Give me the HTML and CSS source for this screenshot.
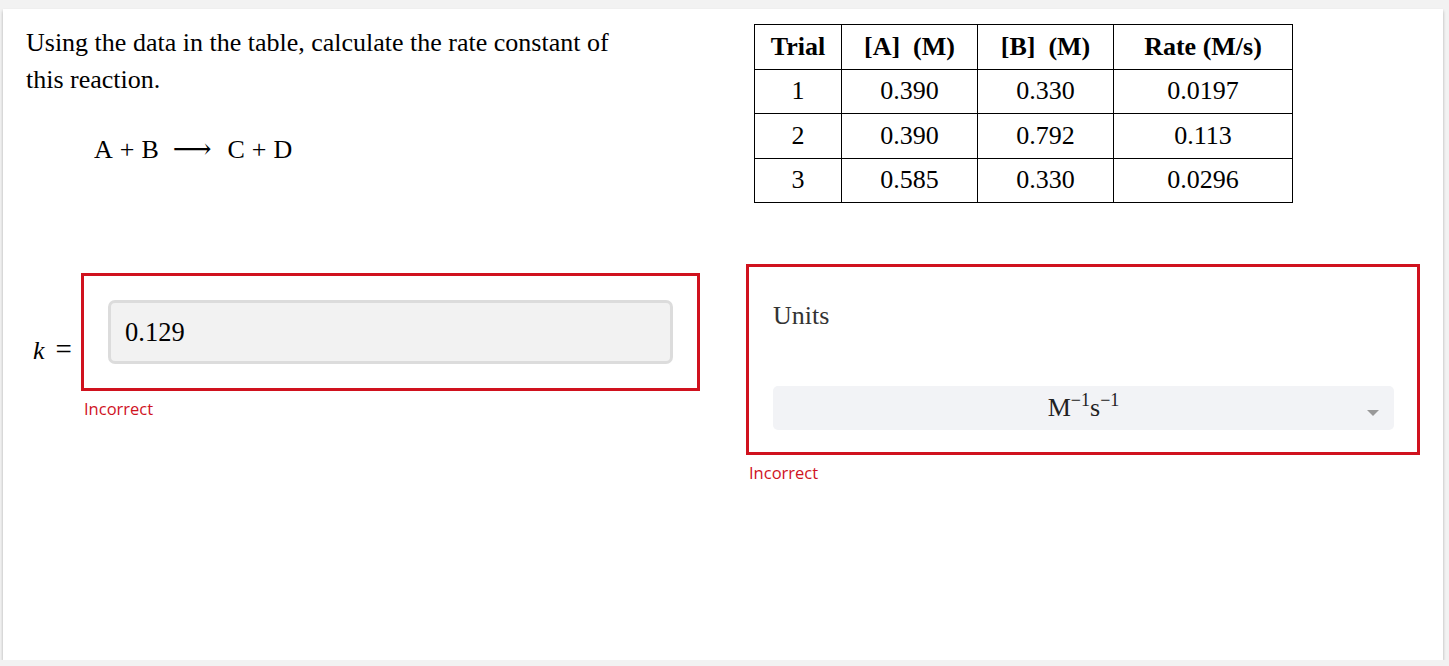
FILE: index.html
```html
<!DOCTYPE html>
<html lang="en">
<head>
    <meta charset="UTF-8">
    <meta name="viewport" content="width=device-width, initial-scale=1.0">
    <title>Rate Constant Question</title>
    <link rel="stylesheet" href="styles.css">
</head>
<body>

    <div class="card">
        <div class="top-row">
            <div class="question">
                <p class="prompt">Using the data in the table, calculate the rate constant of this reaction.</p>
                <p class="equation">A<span class="op">+</span>B<span class="arrow">&#10230;</span>C<span class="op">+</span>D</p>
            </div>

            <table class="data-table">
                <tr>
                    <th class="col-trial">Trial</th>
                    <th class="col-a">[A]&nbsp; (M)</th>
                    <th class="col-b">[B]&nbsp; (M)</th>
                    <th class="col-rate">Rate (M/s)</th>
                </tr>
                <tr>
                    <td>1</td>
                    <td>0.390</td>
                    <td>0.330</td>
                    <td>0.0197</td>
                </tr>
                <tr>
                    <td>2</td>
                    <td>0.390</td>
                    <td>0.792</td>
                    <td>0.113</td>
                </tr>
                <tr>
                    <td>3</td>
                    <td>0.585</td>
                    <td>0.330</td>
                    <td>0.0296</td>
                </tr>
            </table>
        </div>

        <div class="bottom-row">
            <div class="answer-col">
                <div class="field-row">
                    <span class="k-label"><i>k</i><span class="eq">=</span></span>
                    <div class="answer-box">
                        <div class="answer-input">0.129</div>
                    </div>
                </div>
                <div class="feedback feedback-left">Incorrect</div>
            </div>

            <div class="units-col">
                <div class="units-box">
                    <div class="units-label">Units</div>
                    <div class="units-select">
                        <span>M<sup>&minus;1</sup>s<sup>&minus;1</sup></span>
                        <span class="caret"></span>
                    </div>
                </div>
                <div class="feedback">Incorrect</div>
            </div>
        </div>
    </div>

</body>
</html>
```

FILE: styles.css
```css
body {
    margin: 0;
    padding: 0;
    background-color: #f2f2f2;
    font-family: "Liberation Serif", "Times New Roman", serif;
    color: #000;
}

.card {
    margin: 9px 0 0 3px;
    width: 1440px;
    height: 651px;
    box-sizing: border-box;
    padding: 15px 23px 0 23px;
    background-color: #fff;
    box-shadow: 0 2px 3px rgba(0, 0, 0, 0.28);
}

.top-row {
    display: flex;
    align-items: flex-start;
}

.question {
    width: 728px;
}

.prompt {
    margin: 0;
    width: 615px;
    font-size: 26px;
    line-height: 37px;
}

.equation {
    margin: 32px 0 0 68px;
    font-size: 26px;
    line-height: 37px;
}

.op {
    margin: 0 7px;
}

.arrow {
    margin: 0 16px 0 14px;
    font-family: "DejaVu Serif", serif;
    font-size: 27px;
}

.data-table {
    border-collapse: collapse;
    font-size: 26px;
}

.data-table th,
.data-table td {
    border: 1.5px solid #000;
    height: 43.5px;
    padding: 0;
    text-align: center;
}

.data-table th {
    font-weight: bold;
}

.col-trial { width: 86px; }
.col-a { width: 135px; }
.col-b { width: 135px; }
.col-rate { width: 178px; }

.bottom-row {
    display: flex;
    margin-top: 61px;
}

.answer-col {
    width: 720px;
    padding-top: 9px;
}

.field-row {
    display: flex;
    align-items: flex-end;
}

.k-label {
    width: 48px;
    padding-left: 7px;
    padding-bottom: 25px;
    font-size: 26px;
    line-height: 30px;
}

.eq {
    margin-left: 11px;
    font-size: 29px;
}

.answer-box {
    width: 619px;
    box-sizing: border-box;
    padding: 24px;
    border: 3px solid #d0121e;
}

.answer-input {
    height: 64px;
    box-sizing: border-box;
    padding: 0 14px;
    display: flex;
    align-items: center;
    background-color: #f2f2f2;
    border: 3px solid #dcdcdc;
    border-radius: 7px;
    font-size: 26.5px;
}

.feedback {
    margin: 6px 0 0 3px;
    font-family: "Open Sans", "Liberation Sans", sans-serif;
    font-size: 16.5px;
    color: #d0121e;
}

.feedback-left {
    margin-left: 58px;
}

.units-col {
    width: 674px;
}

.units-box {
    height: 191px;
    box-sizing: border-box;
    padding: 24px 23px 0 24px;
    border: 3px solid #d0121e;
}

.units-label {
    font-size: 26px;
    line-height: 50px;
    color: #333;
}

.units-select {
    position: relative;
    margin-top: 45px;
    height: 44px;
    display: flex;
    align-items: center;
    justify-content: center;
    background-color: #f2f3f6;
    border-radius: 5px;
    font-size: 26px;
    color: #222;
}

.units-select sup {
    font-size: 18px;
    line-height: 0;
}

.caret {
    position: absolute;
    right: 15px;
    top: 24px;
    width: 0;
    height: 0;
    border-left: 6px solid transparent;
    border-right: 6px solid transparent;
    border-top: 6px solid #999;
}
```
